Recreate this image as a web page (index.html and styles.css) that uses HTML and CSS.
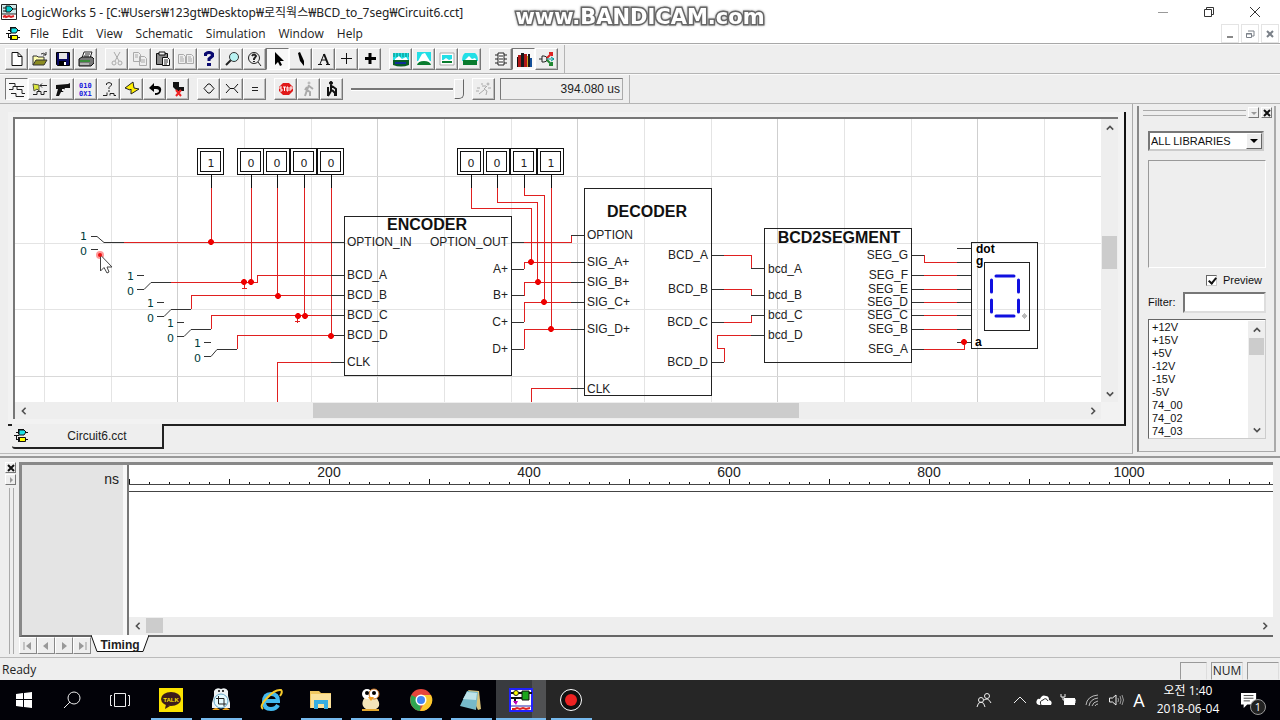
FILE: index.html
```html
<!DOCTYPE html>
<html lang="ko">
<head>
<meta charset="utf-8">
<meta name="viewport" content="width=device-width, initial-scale=1">
<title>LogicWorks 5</title>
<link rel="stylesheet" href="styles.css">
</head>
<body>
<svg class="defs" aria-hidden="true">
  <defs>
    <symbol id="doc-icon" viewBox="0 0 16 16">
      <path d="M4 1h6v5H4zM4 9h6v5H4z" fill="#111"/>
      <path d="M5 2h5l2 2-2 3H5z" fill="#19e3e8" stroke="#111"/><path d="M5.500 9.500h6v4h-6z" fill="#ff0" stroke="#111"/>
      <path d="M2 4.500h3M0 7.500h5M11 4.500h3M2 11.500h3M12 11.500h2M2.500 8v3" stroke="#111" fill="none"/>
    </symbol>
    <symbol id="up" viewBox="0 0 10 10"><path d="M1 7l4-4 4 4" fill="none" stroke="#505050" stroke-width="2"/></symbol>
    <symbol id="down" viewBox="0 0 10 10"><path d="M1 3l4 4 4-4" fill="none" stroke="#505050" stroke-width="2"/></symbol>
    <symbol id="left" viewBox="0 0 10 10"><path d="M7 1L3 5l4 4" fill="none" stroke="#505050" stroke-width="2"/></symbol>
    <symbol id="right" viewBox="0 0 10 10"><path d="M3 1l4 4-4 4" fill="none" stroke="#505050" stroke-width="2"/></symbol>
    <symbol id="x" viewBox="0 0 10 10"><path d="M2 2l6 6M8 2L2 8" stroke="#111" stroke-width="2"/></symbol>
  </defs>
</svg>

<header class="titlebar">
  <svg class="app-icon" viewBox="0 0 16 16"><path d="M.5.5h15v15H.5z" fill="#fff" stroke="#222"/><path d="M1 1h14v9H1z" fill="#cfe9ea"/><path d="M5 2h4l3 3-3 3H5z" fill="#0cc" stroke="#111"/><path d="M2 4h3M2 7h3M12 5h3" stroke="#111"/><path d="M1 10h14" stroke="#222"/><path d="M2 13l2-1 1 1 3-1 2 1 3-1" stroke="#d22" stroke-width="2" fill="none"/></svg>
  <h1 class="title">LogicWorks 5 - [C:₩Users₩123gt₩Desktop₩로직웍스₩BCD_to_7seg₩Circuit6.cct]</h1>
  <div class="watermark">www.BANDICAM.com</div>
  <div class="window-buttons">
    <button aria-label="Minimize"><svg viewBox="0 0 12 12"><path d="M1 6.500h10" stroke="#999"/></svg></button>
    <button aria-label="Restore"><svg viewBox="0 0 12 12"><path d="M1.500 3.500h7v7h-7zM3.500 3V1.500h7v7H9" fill="none" stroke="#333"/></svg></button>
    <button aria-label="Close"><svg viewBox="0 0 12 12"><path d="M1 1l10 10M11 1L1 11" stroke="#333"/></svg></button>
  </div>
</header>

<nav class="menubar">
  <svg class="menu-icon"><use href="#doc-icon"/></svg>
  <button>File</button><button>Edit</button><button>View</button><button>Schematic</button><button>Simulation</button><button>Window</button><button>Help</button>
  <div class="child-buttons">
    <button aria-label="Minimize document"><svg viewBox="0 0 10 10"><path d="M2 8h6" stroke="#888" stroke-width="2"/></svg></button>
    <button aria-label="Restore document"><svg viewBox="0 0 10 10"><path d="M1.500 4.500h5v4h-5zM1 5h6M3 2h6v5H7" fill="none" stroke="#7a8088"/></svg></button>
    <button aria-label="Close document"><svg viewBox="0 0 10 10"><path d="M2 2l6 6M8 2L2 8" stroke="#7a8088" stroke-width="2"/></svg></button>
  </div>
</nav>

<div class="toolrow">
  <div class="toolbar">
    <div class="group">
      <button aria-label="New"><svg viewBox="0 0 16 16"><path d="M3 1.500h6l4 4v9H3zM9 1.500v4h4" fill="#fff" stroke="#111"/></svg></button>
      <button aria-label="Open"><svg viewBox="0 0 16 16"><path d="M1 14V5h4l1 1h6v3" fill="#ffffb0" stroke="#333"/><path d="M1 14l3-5h11l-3 5z" fill="#8a8a20" stroke="#333"/><path d="M9 3q3-2 5 1M14 1v3h-3" fill="none" stroke="#333"/></svg></button>
      <button aria-label="Save"><svg viewBox="0 0 16 16"><path d="M1.500 1.500h13v13h-12l-1-1z" fill="#0a0a60" stroke="#000"/><path d="M4 2h8v6H4z" fill="#e6e6e6"/><path d="M4 10h7v4H4z" fill="#000"/><path d="M9 11h2v3H9z" fill="#fff"/></svg></button>
      <button aria-label="Print"><svg viewBox="0 0 16 16"><path d="M4 7l2-6h8l-2 6z" fill="#fff" stroke="#222"/><path d="M7 3h5M6 5h5" stroke="#222"/><path d="M1 8l3-2h10l2 2v4l-3 3H1z" fill="#777" stroke="#111"/><path d="M2 10h10" stroke="#3b8b3b" stroke-width="2"/><path d="M2 13h9" stroke="#eee"/></svg></button>
    </div>
    <div class="group">
      <button aria-label="Cut"><svg viewBox="0 0 16 16" fill="none" stroke="#aaa"><path d="M5 1l5 9M11 1l-5 9"/><circle cx="5" cy="12" r="2"/><circle cx="11" cy="12" r="2"/></svg></button>
      <button aria-label="Copy"><svg viewBox="0 0 16 16" fill="#eee" stroke="#aaa"><path d="M1.500 1.500h5l2 2v7h-7zM7.500 5.500h5l2 2v7h-7zM3 4h3M3 6h3M9 9h4M9 11h4"/></svg></button>
      <button aria-label="Paste"><svg viewBox="0 0 16 16"><path d="M1.500 2.500h11v11h-11z" fill="#888" stroke="#111"/><path d="M4 1h6v3H4z" fill="#eee" stroke="#111"/><path d="M7.500 6.500h5l2 2v6h-7z" fill="#fff" stroke="#111"/><path d="M9 9h4M9 11h4M9 13h3" stroke="#333"/></svg></button>
      <button aria-label="Duplicate"><svg viewBox="0 0 16 16" fill="#eee" stroke="#aaa"><path d="M.5 3.500h5l2 2v7h-7zM8.500 3.500h5l2 2v7h-7zM2 6h3M2 8h4M2 10h4M10 6h3M10 8h4M10 10h4"/></svg></button>
      <button aria-label="Help"><svg viewBox="0 0 16 16"><path d="M4.500 5V3Q8 0 11.500 3v2L8 8v2" fill="none" stroke="#0a0a70" stroke-width="3"/><path d="M6 12h4v3H6z" fill="#0a0a70"/></svg></button>
      <button aria-label="Find"><svg viewBox="0 0 16 16"><path d="M2 14l5-5" stroke="#222" stroke-width="2"/><circle cx="10" cy="6" r="4.500" fill="#b9f3f3" stroke="#333"/></svg></button>
      <button aria-label="Query zoom"><svg viewBox="0 0 16 16" fill="none" stroke="#222"><circle cx="7" cy="7" r="5.500"/><path d="M11 11l3 4"/><path d="M5 5q2-3 4 0L7 8v1M7 10v1" stroke-width="2"/></svg></button>
      <button class="pressed" aria-label="Point"><svg viewBox="0 0 16 16"><path d="M5 1v13l3-3 2 4 2-1-2-4h4z" fill="#000"/></svg></button>
      <button aria-label="Draw signal"><svg viewBox="0 0 16 16"><path d="M5 2l2-1 4 9v5l-4-5z" fill="#000"/></svg></button>
      <button aria-label="Text"><svg viewBox="0 0 16 16" fill="none" stroke="#111"><path d="M4 13L8 3"/><path d="M8 3l4 10" stroke-width="2"/><path d="M5 9h6M2 13.500h4M10 13.500h4"/></svg></button>
      <button aria-label="Draw line"><svg viewBox="0 0 16 16"><path d="M7.500 2v11M2 7.500h11" stroke="#111"/></svg></button>
      <button aria-label="Draw bus"><svg viewBox="0 0 16 16"><path d="M8 2v11M3 7.500h11" stroke="#000" stroke-width="3"/></svg></button>
    </div>
    <div class="group">
      <button aria-label="Zoom in"><svg viewBox="0 0 16 16"><path d="M0 2h16v12H0z" fill="#22dfe6"/><path d="M0 3h16M0 5h16" stroke="#087" stroke-dasharray="2 1"/><path d="M2 8l4-3 3 3 4-2 2 3v2H2z" fill="#fff"/><path d="M0 9h16v5q-8 3-16 0z" fill="#075d24"/><path d="M2 12h11" stroke="#112c99" stroke-width="2"/></svg></button>
      <button aria-label="Zoom out"><svg viewBox="0 0 16 16"><path d="M1 1h14v9H1z" fill="#22dfe6"/><path d="M1 12L6 3l3-1 6 10z" fill="#fff"/><path d="M1 14q1-4 7-4t7 4z" fill="#087b2e"/></svg></button>
      <button aria-label="Normal size"><svg viewBox="0 0 16 16"><path d="M1 2h14v12H1z" fill="#fff" stroke="#aaa"/><path d="M3 4h10v5H3z" fill="#22dfe6"/><path d="M3 10l4-3 3 2 3-1v4H3z" fill="#fff"/><path d="M3 10h10v2H3z" fill="#087b2e"/></svg></button>
      <button aria-label="Fit window"><svg viewBox="0 0 16 16"><path d="M3 2h10q3 2 3 8H0q0-6 3-8z" fill="#22dfe6"/><path d="M3 9l4-4 3 3 3-1 2 3z" fill="#fff"/><path d="M1 9h14v5H1z" fill="#087b2e"/></svg></button>
    </div>
    <div class="group">
      <button aria-label="Parts"><svg viewBox="0 0 16 16" fill="#fff" stroke="#222"><path d="M5 2h6v12H5zM2 4h3M2 8h3M2 12h3M11 4h3M11 8h3M11 12h3M6 5h4M6 8h4M6 11h4"/></svg></button>
      <button class="pressed" aria-label="Library"><svg viewBox="0 0 16 16"><path d="M1 6h3v10H1z" fill="#111"/><path d="M2 4h3v12H2zM8 3h3v13H8z" fill="#b01818"/><path d="M5 2h3v14H5zM12 3h2v13h-2z" fill="#181818"/><path d="M11 5h1v11h-1z" fill="#d8a020"/><path d="M14 7h2v9h-2z" fill="#155099"/></svg></button>
      <button aria-label="Hierarchy"><svg viewBox="0 0 16 16" fill="none"><path d="M0 8h3M3 5v6h2q3 0 3-3t-3-3z" stroke="#222"/><path d="M8 7l4-4M10 2h3v3" stroke="#d22" stroke-width="2"/><path d="M8 8h7M12 6l3 2-3 2" stroke="#099"/><path d="M8 9l4 4M10 14h3v-3" stroke="#283" stroke-width="2"/></svg></button>
    </div>
  </div>
</div>

<div class="toolrow">
  <div class="toolbar">
    <div class="group">
      <button class="pressed" aria-label="Timing window"><svg viewBox="0 0 16 16"><path d="M0 2.500h6v3h9M0 8.500h4V5.500h4v3h5v4h3M2 12.500h5v3h8" fill="none" stroke="#222"/></svg></button>
      <button aria-label="Add to timing"><svg viewBox="0 0 16 16"><path d="M1 3l6 1v6l-2-2-3 2z" fill="#dbe83c" stroke="#554"/><path d="M8 4.500h7M10 2.500l-2 2 2 2M1 13.500h4v-3h4v3h3v-3h3" fill="none" stroke="#222"/></svg></button>
      <button aria-label="Trigger"><svg viewBox="0 0 16 16"><path d="M1 4l12-1 2-1v5H10l-2 4H6l-2 4H1l2-7H1z" fill="#111"/><path d="M7 8h2v2H7z" fill="#eee"/></svg></button>
      <button aria-label="Logic values"><svg viewBox="0 0 16 16"><g class="bits"><text x="1" y="7">010</text><text x="1" y="15">0X1</text></g></svg></button>
      <button aria-label="Probe"><svg viewBox="0 0 16 16" fill="none" stroke="#222"><path d="M5.500 4V2.500q2.500-2 5 0V4L8 6.500V8M8 9v2"/><path d="M2 14.500h4v-3M9 14.500v-2h4v2h2"/></svg></button>
      <button aria-label="Simulate"><svg viewBox="0 0 16 16"><path d="M9 1L1 7l5 2 1-1v5l8-5-5-1z" fill="#fe0" stroke="#222"/></svg></button>
      <button aria-label="Reset"><svg viewBox="0 0 16 16"><path d="M2 7l5-5v3h4q4 1 3 5-1 4-6 4v-2q4 0 4-2 0-2-3-2H7v3z" fill="#000"/></svg></button>
      <button aria-label="Clear"><svg viewBox="0 0 16 16"><path d="M3 1h6v5h5v4H7L3 6z" fill="#111"/><path d="M6 9l5 6M11 9l-5 6" stroke="#e22" stroke-width="2"/></svg></button>
    </div>
    <div class="group">
      <button aria-label="Expand"><svg viewBox="0 0 16 16"><path d="M7 3L3 7.500 7 12h2l4-4.500L9 3z" fill="none" stroke="#111"/></svg></button>
      <button aria-label="Compress"><svg viewBox="0 0 16 16"><path d="M2 3l4 4.500L2 12M14 3l-4 4.500L14 12M6 7.500h4" fill="none" stroke="#111"/></svg></button>
      <button aria-label="Normal scale"><svg viewBox="0 0 16 16"><path d="M5 6.500h6M5 9.500h6" stroke="#222"/></svg></button>
    </div>
    <div class="group">
      <button aria-label="Stop"><svg viewBox="0 0 16 16"><path d="M5 2h6l4 4v4l-4 4H5l-4-4V6z" fill="#e01818"/><path d="M4 6H2v2h2v2H2M5 6h3M6.500 6v4M9 6v4h1V6zM12 10V6h2v2h-2" stroke="#fff" fill="none"/></svg></button>
      <button aria-label="Step"><svg viewBox="0 0 16 16" fill="none" stroke="#aaa"><circle cx="8" cy="2" r="1"/><path d="M8 4L6 9l3 2v4M6 9l-2 6M8 5l4 3M6 6L4 9" stroke-width="2"/></svg></button>
      <button aria-label="Run"><svg viewBox="0 0 16 16" fill="none" stroke="#111"><circle cx="7" cy="2" r="1.500" fill="#111"/><path d="M7 4v6l-3 5M4 6v9M8 9l3 3v3M8 5l4 3v7" stroke-width="2"/></svg></button>
    </div>
    <input class="speed" type="range" min="0" max="100" value="100" aria-label="Simulation speed">
    <button class="step-button" aria-label="Full speed"><svg viewBox="0 0 16 16" fill="none" stroke="#aaa"><circle cx="12" cy="3" r="1"/><path d="M11 5L8 8l3 2-1 4M8 9l-5 4M10 5H6M12 7h3M1 7h3M0 10h3M5 3h2"/></svg></button>
    <output class="time">394.080 us</output>
  </div>
</div>

<main class="workspace">
  <section class="mdi">
    <div class="frame">
      <div class="sunken">
        <svg class="canvas" role="img" aria-label="Circuit schematic">
          <defs>
            <pattern id="grid" x="-38" y="-143" width="200" height="200" patternUnits="userSpaceOnUse">
              <path d="M67.500 0v200M134.500 0v200" stroke="#e4e4e4"/><path d="M.5 0v200" stroke="#cfcfcf"/>
              <path d="M0 .5h200" stroke="#d9d9d9"/><path d="M0 67.500h200M0 133.500h200" stroke="#e4e4e4"/>
            </pattern>
            <g id="probe"><rect x=".5" y=".5" width="26" height="26" fill="#fff"/><rect x="3.500" y="3.500" width="20" height="20" fill="#fff" stroke-width="1"/><path d="M14.500 27v13"/></g>
            <path id="node" d="M-3-1L-1-3H1L3-1V1L1 3H-1L-3 1z"/>
          </defs>
          <rect width="100%" height="100%" fill="url(#grid)"/>
          <g transform="translate(-15 -119)">
            <g class="wire">
              <path d="M211.500 188V242M251.500 188V282M277.500 188V296M304.500 188V316M331.500 188V336"/>
              <path d="M124 242.500H331M171 282.500H257.500V275.500H331M191.500 309V295.500H331M211.500 329V315.500H331M237.500 349V335.500H331M277.500 403V362.500H331M244.500 282V289M242 288.500h5M297.500 316V323M295 321.500h5"/>
              <path d="M471.500 188V208.500H531.500V262M497.500 188V202.500H537.500V282M524.500 188V195.500H544.500V302M551.500 188V329"/>
              <path d="M524 242.500H571.500V235.500M524.500 269V262.500H571M524.500 296V282.500H571M524.500 322V302.500H571M524.500 349V329.500H571M531.500 403V388.500H571"/>
              <path d="M724 255.500H751.500V269M724 289.500H751.500V296M724 322.500H751.500V315M724.500 362V348.500H717.500V335.500H751"/>
              <path d="M924.500 255V262.500H957M924 275.500H957M924 289.500H957M924 302.500H957M924 315.500H957M924 329.500H957M924 349.500H964.500V342"/>
            </g>
            <g class="pins">
              <path d="M331 242.500h13M331 275.500h13M331 295.500h13M331 315.500h13M331 335.500h13M331 362.500h13"/>
              <path d="M512 242.500h12M512 269.500h12M512 295.500h12M512 322.500h12M512 349.500h12"/>
              <path d="M571 235.500h13M571 262.500h13M571 282.500h13M571 302.500h13M571 329.500h13M571 388.500h13M712 255.500h12M712 289.500h12M712 322.500h12M712 362.500h12"/>
              <path d="M751 268.500h13M751 295.500h13M751 315.500h13M751 335.500h13M912 255.500h12M912 275.500h12M912 289.500h12M912 302.500h12M912 315.500h12M912 329.500h12M912 349.500h12"/>
              <path d="M957 248.500h14M957 262.500h14M957 275.500h14M957 289.500h14M957 302.500h14M957 315.500h14M957 329.500h14M957 342.500h14"/>
            </g>
            <g class="nodes">
              <use href="#node" x="211" y="242"/><use href="#node" x="244" y="282"/><use href="#node" x="251" y="282"/><use href="#node" x="278" y="296"/><use href="#node" x="298" y="316"/><use href="#node" x="305" y="316"/><use href="#node" x="331" y="336"/><use href="#node" x="531" y="262"/><use href="#node" x="538" y="282"/><use href="#node" x="544" y="302"/><use href="#node" x="551" y="329"/><use href="#node" x="964" y="342"/>
            </g>
            <g class="switches">
              <path d="M91 236.500H97L104 242.500H124M91 249.500H98M137 275.500H144M137 289.500H144L151 282.500H171M157 302.500H164M157 316.500H164L171 309.500H191M177 322.500H184M177 336.500H184L191 329.500H211M204 342.500H211M204 356.500H211L217 349.500H237"/>
            </g>
            <g class="switch-text">
              <text x="80" y="240">1</text><text x="80" y="255">0</text><text x="127" y="280">1</text><text x="127" y="295">0</text><text x="147" y="307">1</text><text x="147" y="322">0</text><text x="167" y="327">1</text><text x="167" y="342">0</text><text x="194" y="347">1</text><text x="194" y="362">0</text>
            </g>
            <g class="probes">
              <use href="#probe" x="197" y="148"/><use href="#probe" x="237" y="148"/><use href="#probe" x="263" y="148"/><use href="#probe" x="290" y="148"/><use href="#probe" x="317" y="148"/><use href="#probe" x="457" y="148"/><use href="#probe" x="483" y="148"/><use href="#probe" x="510" y="148"/><use href="#probe" x="537" y="148"/>
            </g>
            <g class="probe-text">
              <text x="211" y="167">1</text><text x="251" y="167">0</text><text x="277" y="167">0</text><text x="304" y="167">0</text><text x="331" y="167">0</text><text x="471" y="167">0</text><text x="497" y="167">0</text><text x="524" y="167">1</text><text x="551" y="167">1</text>
            </g>
            <g class="chips">
              <path d="M344.500 216.500H511.500V375.500H344.500zM584.500 188.500H711.500V395.500H584.500zM764.500 228.500H911.500V362.500H764.500zM971.500 242.500H1037.500V348.500H971.500zM984.500 262.500H1029.500V330.500H984.500z"/>
            </g>
            <g class="chip-title">
              <text x="427" y="230">ENCODER</text><text x="647" y="217">DECODER</text><text x="839" y="243">BCD2SEGMENT</text>
            </g>
            <g class="labels">
              <text x="347" y="246">OPTION_IN</text><text x="347" y="279">BCD_A</text><text x="347" y="299">BCD_B</text><text x="347" y="319">BCD_C</text><text x="347" y="339">BCD_D</text><text x="347" y="366">CLK</text>
              <text x="587" y="239">OPTION</text><text x="587" y="266">SIG_A+</text><text x="587" y="286">SIG_B+</text><text x="587" y="306">SIG_C+</text><text x="587" y="333">SIG_D+</text><text x="587" y="393">CLK</text>
              <text x="768" y="273">bcd_A</text><text x="768" y="299">bcd_B</text><text x="768" y="319">bcd_C</text><text x="768" y="339">bcd_D</text>
            </g>
            <g class="labels end">
              <text x="508" y="246">OPTION_OUT</text><text x="508" y="273">A+</text><text x="508" y="299">B+</text><text x="508" y="326">C+</text><text x="508" y="353">D+</text>
              <text x="708" y="259">BCD_A</text><text x="708" y="293">BCD_B</text><text x="708" y="326">BCD_C</text><text x="708" y="366">BCD_D</text>
              <text x="908" y="259">SEG_G</text><text x="908" y="279">SEG_F</text><text x="908" y="293">SEG_E</text><text x="908" y="306">SEG_D</text><text x="908" y="319">SEG_C</text><text x="908" y="333">SEG_B</text><text x="908" y="353">SEG_A</text>
            </g>
            <g class="labels strong"><text x="976" y="253">dot</text><text x="976" y="265">g</text><text x="975" y="346">a</text></g>
            <path class="segments" d="M996 276H1014M996 316H1014M991.500 280V292M991.500 300V312M1018.500 280V292M1018.500 300V312"/>
            <path d="M1024 313l3 3-3 3-3-3z" fill="#bbb"/>
            <g class="pointer">
              <circle cx="100" cy="255" r="4" fill="#f99"/>
              <path d="M100.500 255V271L104 267.500 107 273 109 272 107 267H112z" fill="#fff" stroke="#444"/>
              <circle cx="100" cy="255" r="2" fill="#e11"/>
            </g>
          </g>
        </svg>
        <div class="scroll vertical">
          <button aria-label="Scroll up"><svg><use href="#up"/></svg></button>
          <div class="track"><div class="thumb"></div></div>
          <button aria-label="Scroll down"><svg><use href="#down"/></svg></button>
        </div>
        <div class="scroll horizontal">
          <button aria-label="Scroll left"><svg><use href="#left"/></svg></button>
          <div class="track"><div class="thumb"></div></div>
          <button aria-label="Scroll right"><svg><use href="#right"/></svg></button>
        </div>
      </div>
    </div>
    <button class="doc-tab"><svg><use href="#doc-icon"/></svg><span>Circuit6.cct</span></button>
  </section>

  <aside class="library">
    <div class="grip">
      <div class="grip-lines"></div>
      <button aria-label="Collapse"><svg viewBox="0 0 10 10"><path d="M2 4h6L5 7z" fill="#999"/></svg></button>
      <button aria-label="Close library"><svg><use href="#x"/></svg></button>
    </div>
    <div class="library-body">
      <div class="combo">
        <select aria-label="Library"><option>ALL LIBRARIES</option></select>
        <span class="combo-arrow"><svg viewBox="0 0 10 10"><path d="M1 3h8L5 7z"/></svg></span>
      </div>
      <div class="preview"></div>
      <label class="check"><input type="checkbox" checked><span>Preview</span></label>
      <div class="filter"><label for="filter">Filter:</label><input id="filter" type="text"></div>
      <div class="parts">
        <select size="9" aria-label="Parts">
          <option>+12V</option><option>+15V</option><option>+5V</option><option>-12V</option><option>-15V</option><option>-5V</option><option>74_00</option><option>74_02</option><option>74_03</option>
        </select>
        <div class="scroll vertical">
          <button aria-label="Parts up"><svg><use href="#up"/></svg></button>
          <div class="track"><div class="thumb"></div></div>
          <button aria-label="Parts down"><svg><use href="#down"/></svg></button>
        </div>
      </div>
    </div>
  </aside>
</main>

<section class="timing">
  <div class="side-grip">
    <button aria-label="Close timing"><svg><use href="#x"/></svg></button>
    <button aria-label="Expand timing"><svg viewBox="0 0 10 10"><path d="M4 2l3 3-3 3z" fill="#999"/></svg></button>
    <div class="side-lines"></div>
  </div>
  <div class="timing-main">
    <div class="panes">
      <div class="names">ns</div>
      <div class="plot">
        <svg class="ruler">
          <defs>
            <pattern id="minor" width="20" height="20" patternUnits="userSpaceOnUse"><path d="M.5 17v3" stroke="#111"/></pattern>
            <pattern id="major" width="100" height="20" patternUnits="userSpaceOnUse"><path d="M.5 14v6" stroke="#111"/></pattern>
          </defs>
          <rect width="100%" height="20" fill="url(#minor)"/><rect width="100%" height="20" fill="url(#major)"/>
          <path d="M0 19.500h4000M0 26.500h4000" stroke="#444"/>
          <text x="200" y="12">200</text><text x="400" y="12">400</text><text x="600" y="12">600</text><text x="800" y="12">800</text><text x="1000" y="12">1000</text>
        </svg>
        <div class="scroll horizontal">
          <button aria-label="Timing left"><svg><use href="#left"/></svg></button>
          <div class="track"><div class="thumb"></div></div>
          <button aria-label="Timing right"><svg><use href="#right"/></svg></button>
        </div>
      </div>
    </div>
    <div class="sheet-tabs">
      <button class="nav" aria-label="First"><svg viewBox="0 0 12 12"><path d="M2 2v8" stroke="#999"/><path d="M9 2v8L4 6z"/></svg></button>
      <button class="nav" aria-label="Previous"><svg viewBox="0 0 12 12"><path d="M8 2v8L3 6z"/></svg></button>
      <button class="nav" aria-label="Next"><svg viewBox="0 0 12 12"><path d="M4 2v8l5-4z"/></svg></button>
      <button class="nav" aria-label="Last"><svg viewBox="0 0 12 12"><path d="M10 2v8" stroke="#999"/><path d="M3 2v8l5-4z"/></svg></button>
      <button class="sheet"><svg viewBox="0 0 58 18"><path d="M0 0L6 16.500H52L58 0" fill="#fff" stroke="#111"/></svg><span>Timing</span></button>
    </div>
  </div>
</section>

<footer class="status"><span class="ready">Ready</span><span class="cell"></span><span class="cell">NUM</span><span class="cell"></span></footer>

<nav class="taskbar">
  <div class="pinned">
    <button class="sys" aria-label="Start"><svg viewBox="0 0 24 24"><path d="M4 6l7-1v6H4zM12 5l8-1v7h-8zM4 12h7v7l-7-1zM12 12h8v8l-8-1z" fill="#fff"/></svg></button>
    <button class="sys" aria-label="Search"><svg viewBox="0 0 24 24" fill="none" stroke="#eee"><circle cx="14" cy="10" r="6"/><path d="M10 14l-6 6"/></svg></button>
    <button class="sys" aria-label="Task view"><svg viewBox="0 0 24 24" fill="none" stroke="#eee"><path d="M6.500 5.500h11v13h-11zM4 7.500H2.500v10H4M20 7.500h1.500v10H20"/></svg></button>
  </div>
  <div class="apps">
    <button class="open" aria-label="KakaoTalk"><svg viewBox="0 0 24 24"><path d="M0 0h24v24H0z" fill="#fbe300"/><ellipse cx="12" cy="11" rx="10" ry="7" fill="#3b1c1c"/><path d="M7 16l-1 5 5-3z" fill="#3b1c1c"/><text class="talk" x="12" y="14">TALK</text></svg></button>
    <button class="open" aria-label="Capture"><svg viewBox="0 0 24 24"><path d="M5 8V3q2-4 7-2 5-2 7 2v5l2 7v5H3v-5z" fill="#eef3f5"/><circle cx="10" cy="3" r="1"/><circle cx="14" cy="3" r="1"/><circle cx="12" cy="13" r="7" fill="#e6faff" stroke="#68a9c8"/><path d="M9.500 8v8h8M7 10.500h8v8" fill="none" stroke="#222"/><path d="M3 22q4-4 8 0zM13 22q4-4 8 0z" fill="#f2a51c"/></svg></button>
    <button aria-label="Internet Explorer"><svg viewBox="0 0 24 24" fill="none"><path d="M19 17q-2 4-7 4-7 0-7-7 0-8 7-8t7 7H7" stroke="#43b9ee" stroke-width="4"/><path d="M4 21q-4-3 4-11Q16 1 22 2q2 2-1 6" stroke="#f5c92b" stroke-width="2"/></svg></button>
    <button class="open" aria-label="Explorer"><svg viewBox="0 0 24 24"><path d="M1 3h9l2 2h10v15H1z" fill="#f0c761"/><path d="M2 6h20v14H2z" fill="#fbe19a"/><path d="M5 21v-9h14v9h-4v-5H9v5z" fill="#37aee2"/></svg></button>
    <button class="open" aria-label="Messenger"><svg viewBox="0 0 24 24"><path d="M6 9q-4 6-2 9 2 4 8 4t8-4q1-4-3-9z" fill="#f4e5b9"/><path d="M3 22h17" stroke="#e2a72f" stroke-width="2"/><circle cx="8" cy="6" r="5" fill="#fff"/><circle cx="15" cy="6" r="5" fill="#fff" stroke="#c77220"/><circle cx="8" cy="5" r="2"/><circle cx="15" cy="5" r="2"/><path d="M9 9h6l-3 4z" fill="#f39c1c"/></svg></button>
    <button class="open" aria-label="Chrome"><svg viewBox="0 0 24 24"><circle cx="12" cy="12" r="11" fill="#e6453c"/><path d="M2.500 7L12 12l-1 11A11 11 0 0 1 2.500 7z" fill="#2fa650"/><path d="M12 7h10a11 11 0 0 1-11 16l4-8z" fill="#fbc92d"/><circle cx="12" cy="12" r="5.500" fill="#fff"/><circle cx="12" cy="12" r="4" fill="#4285f4"/></svg></button>
    <button class="open" aria-label="Notepad"><svg viewBox="0 0 24 24"><path d="M9 2l11 1 2 18-3 1z" fill="#d9c47c"/><path d="M8 3l11 1-2 18L1 18z" fill="#77b9c9"/><path d="M8 4l10 1-1 7-13-1z" fill="#bfe3e8"/></svg></button>
    <button class="open active" aria-label="LogicWorks"><svg viewBox="0 0 24 24"><path d="M1 1h22v22H1z" fill="#fff" stroke="#22f" stroke-width="2"/><path d="M2 5h5M2 10h5M7 5h8M7 10h8M15 5h8M6 10v5" stroke="#111" stroke-width="2"/><circle cx="7" cy="5" r="2.500" fill="#ff0" stroke="#222"/><path d="M13 3h7v9h-7z" fill="#1ba51b" stroke="#111"/><path d="M4 13h5l-2 4z" fill="#b0b"/><path d="M2 18h20" stroke="#22a"/><path d="M3 21h3l2-1 3 1 3-1 3 1 4-1" stroke="#d22" fill="none" stroke-width="2"/></svg></button>
    <button class="open" aria-label="Bandicam"><svg viewBox="0 0 24 24"><circle cx="12" cy="12" r="10.500" fill="#111" stroke="#fff"/><circle cx="12" cy="12" r="6" fill="#ee2222"/></svg></button>
  </div>
  <div class="tray">
    <button class="people" aria-label="People"><svg viewBox="0 0 16 16" fill="none" stroke="#eee"><circle cx="11" cy="4" r="2.500"/><circle cx="5" cy="8" r="2.500"/><path d="M1 15q1-5 4-5t4 5M8 8q4-3 7 3"/></svg></button>
    <button aria-label="Show hidden icons"><svg viewBox="0 0 16 16"><path d="M2 11l6-6 6 6" fill="none" stroke="#eee"/></svg></button>
    <button aria-label="OneDrive"><svg viewBox="0 0 16 16"><path d="M3 13q-4-1-2-5 1-2 3-1 2-5 6-3 3 0 3 4 4 1 2 5z" fill="#fff"/><path d="M5 13q-2-4 2-5 3-3 5 1" fill="none" stroke="#222"/></svg></button>
    <button aria-label="Power"><svg viewBox="0 0 16 16"><path d="M4 6h11v7H4z" fill="#fff"/><path d="M1 2v3h4V2M3 5v3h2M15 8h1v3" fill="none" stroke="#eee"/></svg></button>
    <button aria-label="Network"><svg viewBox="0 0 16 16" fill="none" stroke="#bbb"><path d="M2 13Q3 4 14 3M5 14q1-7 9-8M8 14q1-4 6-5M11 14q1-2 3-2"/></svg></button>
    <button aria-label="Volume"><svg viewBox="0 0 16 16" fill="none" stroke="#eee"><path d="M1.500 6h3L8 3v10l-3.500-3h-3z"/><path d="M10 6q1 2 0 4M12 4q2 4 0 8M14 3q3 5 0 10" stroke="#999"/></svg></button>
    <button class="ime" aria-label="Input mode">A</button>
    <div class="clock"><span>오전 1:40</span><span>2018-06-04</span></div>
    <button class="notify" aria-label="Notifications"><svg viewBox="0 0 20 18"><path d="M1 1h17v13H8l-4 4v-4H1z" fill="#fff"/><path d="M4 4h11M4 7h11M4 10h7" stroke="#333"/></svg><span>1</span></button>
  </div>
</nav>
</body>
</html>
```

FILE: styles.css
```css
* { box-sizing: border-box; }
body {
  margin: 0;
  height: 100vh;
  min-height: 600px;
  display: flex;
  flex-direction: column;
  background: #eeeeee;
  color: #222;
  font: 12px/16px "Open Sans", "Noto Sans CJK KR", sans-serif;
  overflow: hidden;
}
button {
  display: flex;
  align-items: center;
  justify-content: center;
  margin: 0;
  padding: 0;
  border: 0;
  background: none;
  color: inherit;
  font: inherit;
}
svg { display: block; flex: none; }
.defs { position: absolute; width: 0; height: 0; }

/* Title and menu */
.titlebar {
  position: relative;
  flex: 0 0 24px;
  display: flex;
  align-items: center;
  padding-left: 1px;
  gap: 4px;
  background: #fff;
}
.app-icon { width: 16px; height: 16px; }
.title { margin: 0; padding-top: 2px; font: 400 12px/16px "Noto Sans", "Noto Sans CJK KR", sans-serif; white-space: nowrap; }
.watermark {
  position: absolute;
  left: 50%;
  top: 5px;
  transform: translateX(-50%);
  color: #fff;
  font: bold 21px/24px "DejaVu Sans", sans-serif;
  -webkit-text-stroke: 3px #666;
  paint-order: stroke fill;
  filter: drop-shadow(0 0 1px #999);
}
.window-buttons { display: flex; margin-left: auto; padding-right: 2px; }
.window-buttons button { width: 46px; height: 22px; }
.window-buttons svg { width: 12px; height: 12px; }
.menubar {
  flex: 0 0 20px;
  display: flex;
  align-items: center;
  padding-left: 6px;
  background: #fff;
  border-bottom: 1px solid #a8a8a8;
}
.menubar > button { padding: 0 7px 0 6px; }
.menu-icon { width: 16px; height: 16px; margin-right: 2px; }
.child-buttons { display: flex; gap: 2px; margin-left: auto; padding-right: 1px; align-self: stretch; }
.child-buttons button { width: 18px; border: 1px solid #e4e4e4; }
.child-buttons svg { width: 10px; height: 10px; }

/* Toolbars */
.toolrow { flex: 0 0 30px; display: flex; border-bottom: 1px solid #b4b4b4; border-top: 1px solid #fafafa; }
.toolbar { display: flex; align-items: center; gap: 8px; padding: 0 6px 0 5px; border-right: 1px solid #b4b4b4; }
.group { display: flex; }
.group button, .step-button {
  width: 23px;
  height: 22px;
  border: 1px solid;
  border-color: #fff #777 #777 #fff;
  box-shadow: inset -1px -1px #bbb;
}
.group .pressed { background: #f8f8f8; border-color: #777 #fff #fff #777; box-shadow: none; }
.group svg, .step-button svg { width: 16px; height: 16px; }
.bits { font: bold 7px "DejaVu Sans Mono", monospace; fill: #2020dd; }
.speed { appearance: none; width: 113px; height: 22px; margin: 0; background: none; }
.speed::-webkit-slider-runnable-track {
  height: 22px;
  background: linear-gradient(#777, #777) 0 10px / 102px 2px no-repeat, linear-gradient(#fff, #fff) 0 12px / 102px 1px no-repeat;
}
.speed::-webkit-slider-thumb {
  appearance: none;
  width: 10px;
  height: 20px;
  margin-top: 1px;
  border: 1px solid;
  border-color: #fff #666 #666 #fff;
  border-radius: 0 0 5px 0;
  background: #eee;
}
.step-button + .time { margin-left: -3px; }
.time {
  width: 123px;
  height: 22px;
  padding: 1px 2px;
  border: 1px solid;
  border-color: #777 #aaa #aaa #777;
  text-align: right;
  font: 12px/18px "Liberation Sans", sans-serif;
}

/* Document area */
.workspace { flex: 1 1 0; min-height: 0; display: flex; }
.mdi {
  flex: 1;
  min-width: 0;
  display: flex;
  flex-direction: column;
  padding: 8px 6px 4px 8px;
  border-right: 1px solid #aaa;
  border-bottom: 1px solid #bbb;
}
.frame {
  flex: 1;
  min-height: 0;
  display: flex;
  padding: 5px 6px 5px 5px;
  border-right: 2px solid #111;
  border-bottom: 2px solid #222;
  background: #f2f2f2;
}
.sunken {
  flex: 1;
  min-width: 0;
  display: grid;
  grid-template-columns: minmax(0, 1fr) 17px;
  grid-template-rows: minmax(0, 1fr) 17px;
  border-left: 2px solid #777;
  border-top: 2px solid #777;
}
.canvas { width: 100%; height: 100%; background: #fff; shape-rendering: crispEdges; font-family: "Liberation Sans", sans-serif; }
.wire { fill: none; stroke: #e02020; }
.nodes { fill: #ee0000; shape-rendering: auto; }
.pins, .switches { fill: none; stroke: #333; }
.switches, .pointer { shape-rendering: auto; }
.chips { fill: none; stroke: #222; }
.probes { stroke: #111; }
.labels { font-size: 12px; fill: #222; }
.end { text-anchor: end; }
.strong { font-weight: 700; fill: #000; }
.chip-title { font-size: 16px; font-weight: 700; text-anchor: middle; fill: #111; }
.switch-text { font: 11px "DejaVu Sans", sans-serif; fill: #003c3c; }
.probe-text { font: 11px "DejaVu Sans", sans-serif; text-anchor: middle; fill: #222; }
.segments { fill: none; stroke: #1010e0; stroke-width: 3; stroke-linecap: round; shape-rendering: auto; }

.scroll { display: flex; background: #eeeeee; }
.scroll button { flex: 0 0 17px; min-width: 0; }
.scroll button svg { width: 8px; height: 8px; }
.track { flex: 1; min-width: 0; min-height: 0; }
.thumb { background: #cccccc; }
.vertical { flex-direction: column; width: 17px; }
.vertical .thumb { width: 15px; margin: 0 auto; }
.sunken .vertical .track { padding-top: 40%; padding-top: 100px; }
.sunken .vertical .thumb { height: 33px; }
.horizontal .thumb { height: 15px; margin-top: 1px; }
.sunken .horizontal .track { padding-left: 281px; }
.sunken .horizontal .thumb { width: 63%; }

.doc-tab {
  position: relative;
  justify-content: flex-start;
  width: 152px;
  height: 25px;
  margin: -2px 0 0 4px;
  padding-left: 2px;
  border: solid #222;
  border-width: 0 2px 2px 0;
  border-radius: 0 0 0 3px;
  background: #eee;
  font: 12px/16px "Liberation Sans", sans-serif;
}
.doc-tab svg { width: 16px; height: 16px; }
.doc-tab span { flex: 1; padding-left: 2px; }

/* Library pane */
.library {
  flex: 0 0 139px;
  display: flex;
  flex-direction: column;
  margin: 2px 4px 2px 4px;
  padding: 0 2px 0 4px;
  border-left: 2px solid #888;
  border-right: 2px solid #aaa;
  border-bottom: 1px solid #aaa;
  font: 11px/13px "Liberation Sans", sans-serif;
  color: #111;
}
.grip { display: flex; align-items: center; height: 13px; gap: 2px; }
.grip-lines { flex: 1; height: 6px; border: solid #aaa; border-width: 1px 0; }
.grip button, .side-grip button { width: 11px; height: 11px; border: 1px solid; border-color: #fff #777 #777 #fff; }
.grip svg, .side-grip svg { width: 10px; height: 10px; }
.library-body { flex: 1; min-height: 0; display: flex; flex-direction: column; padding: 12px 6px 12px 5px; }
.combo { position: relative; height: 20px; margin-right: 2px; border: 2px solid; border-color: #777 #ccc #ccc #777; }
.combo select { appearance: none; width: 100%; height: 100%; padding: 0 16px 0 1px; border: 0; border-radius: 0; background: #fff; color: inherit; font: inherit; }
.combo-arrow { position: absolute; right: 0; top: 0; width: 16px; height: 16px; padding: 2px; background: #eee; border: 1px solid; border-color: #fff #666 #666 #fff; pointer-events: none; }
.combo-arrow svg { width: 10px; height: 10px; }
.preview { height: 108px; margin-top: 9px; border: 1px solid; border-color: #999 #fff #fff #999; }
.check { display: flex; align-items: center; justify-content: flex-end; gap: 6px; height: 24px; padding-right: 4px; }
.check input {
  appearance: none;
  width: 11px;
  height: 11px;
  margin: 0;
  border: 1px solid;
  border-color: #666 #ccc #ccc #666;
  background: #fff;
}
.check input:checked::after { content: ""; display: block; width: 3px; height: 6px; margin: 0 3px; border: solid #111; border-width: 0 2px 2px 0; transform: rotate(40deg); }
.filter { display: flex; align-items: center; justify-content: space-between; height: 21px; }
.filter input { width: 83px; height: 21px; padding: 0 2px; border: 2px solid; border-color: #777 #ddd #ddd #777; background: #fff; font: inherit; }
.parts { flex: 1; min-height: 0; display: flex; margin-top: 6px; padding-top: 1px; border: 1px solid; border-color: #666 #ccc #ccc #666; background: #fff; }
.parts select { flex: 1; min-width: 0; height: 100%; margin: 0; padding: 0 0 0 1px; border: 0; outline: 0; background: #fff; color: inherit; font: inherit; overflow: hidden; }
.parts option { height: 13px; min-height: 13px; padding: 0 2px; line-height: 13px; }
.parts .thumb { height: 17px; }

/* Timing pane */
.timing { flex: 0 0 202px; display: flex; padding: 4px 7px 3px 5px; margin-top: 2px; border-top: 2px solid #999; border-bottom: 1px solid #bbb; }
.side-grip { flex: 0 0 14px; display: flex; flex-direction: column; gap: 1px; }
.side-lines { flex: 1; width: 5px; margin: 2px 0 0 4px; border: solid #aaa; border-width: 0 1px; }
.timing-main { flex: 1; min-width: 0; display: flex; flex-direction: column; }
.panes { flex: 1; min-height: 0; display: flex; border-left: 3px solid #888; border-top: 3px solid #888; border-bottom: 2px solid #666; }
.names { flex: 0 0 101px; padding: 5px 4px; background: #e4e4e4; text-align: right; font: 14px/18px "Liberation Sans", sans-serif; }
.plot { flex: 1; min-width: 0; display: flex; flex-direction: column; border-left: 4px solid #f8f8f8; box-shadow: inset 2px 0 #777; padding-left: 2px; background: #fff; }
.ruler { width: 100%; height: 32px; font: 14px "Liberation Sans", sans-serif; text-anchor: middle; fill: #222; shape-rendering: crispEdges; }
.plot .scroll { height: 18px; margin-top: auto; }
.plot .thumb { width: 17px; }
.sheet-tabs { display: flex; height: 17px; }
.nav { width: 18px; border: 1px solid; border-color: #fff #888 #888 #fff; }
.nav svg { width: 12px; height: 12px; fill: #999; }
.sheet { position: relative; width: 58px; margin-top: -2px; font: bold 12px/16px "Liberation Sans", sans-serif; }
.sheet svg { position: absolute; inset: 0; width: 58px; height: 18px; }
.sheet span { position: relative; }

/* Status */
.status { flex: 0 0 20px; display: flex; gap: 4px; padding: 4px 1px 0 2px; }
.ready { flex: 1; }
.cell { width: 32px; border: 1px solid; border-color: #999 #ddd #eee #999; text-align: center; }
.ready + .cell { width: 27px; }

/* Taskbar */
.taskbar { flex: 0 0 40px; display: flex; background: #262626; color: #fff; }
.pinned { display: flex; background: #020208; }
.taskbar button { height: 40px; }
.sys { width: 48px; }
.sys svg { width: 24px; height: 24px; }
.apps { display: flex; padding-left: 2px; background: linear-gradient(90deg, #020208 0 353px, #262626 353px); }
.apps button { position: relative; width: 50px; }
.apps svg { width: 24px; height: 24px; }
.apps .open::after { content: ""; position: absolute; left: 5px; right: 4px; bottom: 0; height: 2px; background: #76b9ed; }
.apps .active { background: linear-gradient(90deg, #393b3f 0 36px, #505153 36px); }
.apps .active::after { left: 0; right: 0; }
.talk { font: bold 6px "Liberation Sans", sans-serif; text-anchor: middle; fill: #fbe300; }
.tray { flex: 1; display: flex; align-items: center; justify-content: flex-end; background: linear-gradient(270deg, #020208 0 80px, #262626 80px); }
.tray button { width: 24px; }
.tray .people { margin-right: 12px; }
.tray svg { width: 16px; height: 16px; }
.tray .ime { font-size: 18px; width: 22px; }
.clock { display: flex; flex-direction: column; align-items: center; width: 76px; font: 12px/18px "Open Sans", "Noto Sans CJK KR", sans-serif; }
.tray .notify { position: relative; width: 46px; margin-right: 8px; }
.notify svg { width: 18px; height: 16px; }
.notify span { position: absolute; left: 24px; top: 19px; width: 16px; height: 16px; border: 1px solid #999; border-radius: 50%; background: #222; font-size: 11px; line-height: 14px; text-align: center; }
```
